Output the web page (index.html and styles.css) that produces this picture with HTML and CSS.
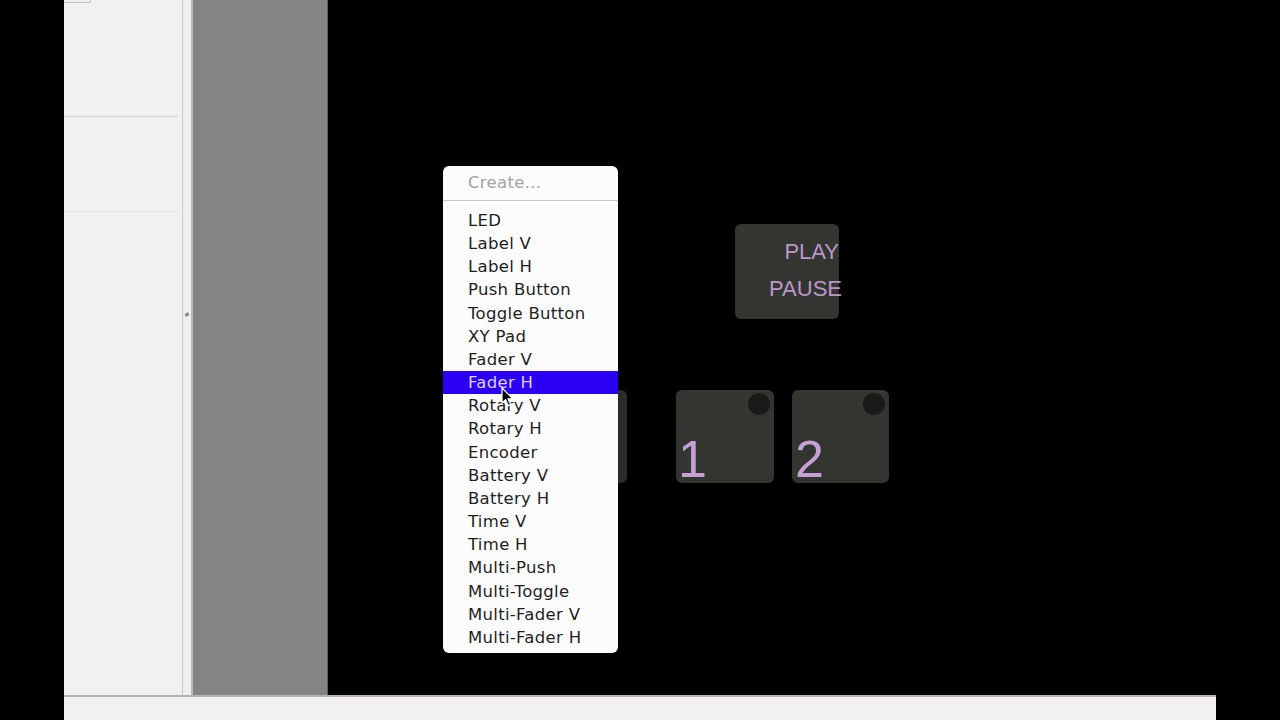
FILE: index.html
```html
<!DOCTYPE html>
<html lang="en">
<head>
  <meta charset="UTF-8" />
  <meta name="viewport" content="width=device-width, initial-scale=1" />
  <title>Layout Editor</title>
  <link rel="stylesheet" href="styles.css">
</head>
<body>
  <div class="window">
    <div class="workspace">
      <aside class="sidebar">
        <div class="sidebar-tab"></div>
        <div class="sidebar-section first"></div>
        <div class="sidebar-section second"></div>
      </aside>
      <div class="splitter"><span class="grip"></span></div>
      <div class="palette"></div>

      <main class="canvas">
        <div class="widget toggle behind"></div>

        <div class="widget label-pad">
          <span>PLAY</span>
          <span>PAUSE</span>
        </div>

        <div class="widget toggle first">
          <span class="led"></span>
          <span class="num">1</span>
        </div>
        <div class="widget toggle second">
          <span class="led"></span>
          <span class="num">2</span>
        </div>
      </main>
    </div>
    <div class="statusbar"></div>
  </div>

  <!-- right-click menu on the canvas -->
  <div class="context-menu">
    <div class="menu-title">Create...</div>
    <div class="menu-sep"></div>
    <ul class="menu-items">
      <li>LED</li>
      <li>Label V</li>
      <li>Label H</li>
      <li>Push Button</li>
      <li>Toggle Button</li>
      <li>XY Pad</li>
      <li>Fader V</li>
      <li class="active">Fader H</li>
      <li>Rotary V</li>
      <li>Rotary H</li>
      <li>Encoder</li>
      <li>Battery V</li>
      <li>Battery H</li>
      <li>Time V</li>
      <li>Time H</li>
      <li>Multi-Push</li>
      <li>Multi-Toggle</li>
      <li>Multi-Fader V</li>
      <li>Multi-Fader H</li>
    </ul>
  </div>

  <svg class="pointer" width="14" height="21" viewBox="0 0 14 21">
    <path d="M1 1 L1 16 L4.6 12.6 L7.2 18.6 L9.6 17.6 L7 11.8 L11.8 11.8 Z" fill="#000" stroke="#fff" stroke-width="1.2" stroke-linejoin="round"/>
  </svg>
</body>
</html>
```

FILE: styles.css
```css
body {
  margin: 0;
  padding: 0;
  background-color: #000;
  font-family: "DejaVu Sans", Verdana, sans-serif;
  overflow: hidden;
}

.window {
  margin-left: 64px;
  width: 1152px;
  height: 720px;
  display: flex;
  flex-direction: column;
}

.workspace {
  height: 695px;
  flex-shrink: 0;
  display: flex;
}

/* left inspector */
.sidebar {
  width: 118px;
  background-color: #f2f0f1;
  display: flex;
  flex-direction: column;
}

.sidebar-tab {
  width: 26px;
  height: 2px;
  border-right: 1px solid #c4c2c3;
  border-bottom: 1px solid #c4c2c3;
  border-bottom-right-radius: 3px;
}

.sidebar-section {
  margin-right: 4px;
}

.sidebar-section.first {
  height: 113px;
  border-bottom: 1px solid #d2d0d1;
}

.sidebar-section.second {
  height: 94px;
  border-bottom: 1px solid #e6e4e5;
}

.splitter {
  width: 11px;
  box-sizing: border-box;
  background-color: #f0eeef;
  border-left: 1px solid #cac8c9;
  border-right: 2px solid #bab8b9;
  position: relative;
}

.grip {
  position: absolute;
  left: 2px;
  top: 313px;
  width: 4px;
  height: 3px;
  background-color: #8a8889;
  transform: rotate(-35deg);
}

.palette {
  width: 135px;
  box-sizing: border-box;
  background-color: #858384;
  border-right: 1px solid #5e5d5e;
}

/* black layout area with the widgets */
.canvas {
  flex: 1;
  position: relative;
  background-color: #000;
}

.statusbar {
  height: 25px;
  box-sizing: border-box;
  background-color: #f2f0f1;
  border-top: 2px solid #b4b2b3;
}

.widget {
  position: absolute;
  background-color: #333531;
  border-radius: 6px;
  font-family: "Liberation Sans", Arial, sans-serif;
  color: #bd97cc;
}

.label-pad {
  left: 407px;
  top: 224px;
  width: 104px;
  height: 95px;
  display: flex;
  flex-direction: column;
  align-items: flex-end;
  padding-top: 9px;
  box-sizing: border-box;
  font-size: 22px;
  line-height: 37px;
}

.label-pad span {
  margin-right: -3px;
}

.label-pad span:first-child {
  margin-right: 0;
}

.toggle {
  top: 390px;
  width: 98px;
  height: 93px;
}

.toggle.behind {
  left: 201px;
  background-color: #2b2d2a;
}

.toggle.first {
  left: 348px;
}

.toggle.second {
  left: 464px;
  width: 97px;
}

.led {
  position: absolute;
  top: 3px;
  right: 4px;
  width: 22px;
  height: 22px;
  border-radius: 50%;
  background-color: #1a1b18;
}

.num {
  position: absolute;
  left: 2px;
  bottom: -2px;
  font-size: 52px;
  line-height: 52px;
  color: #c7a0d6;
}

.toggle.second .num {
  left: 3px;
}

/* popup */
.context-menu {
  position: absolute;
  left: 443px;
  top: 166px;
  width: 175px;
  height: 487px;
  box-sizing: border-box;
  padding-top: 5px;
  background-color: #fdfcfd;
  border-radius: 6px;
  font-size: 16.5px;
  letter-spacing: 0.3px;
  color: #1e1e1e;
}

.menu-title {
  height: 24px;
  line-height: 24px;
  padding-left: 25px;
  color: #a3a2a3;
}

.menu-sep {
  height: 1px;
  margin: 5px 0 8px;
  background-color: #c9c8c9;
}

.menu-items {
  list-style: none;
  margin: 0;
  padding: 0;
}

.menu-items li {
  height: 23.17px;
  line-height: 23px;
  padding-left: 25px;
}

.menu-items li.active {
  background-color: #2c00f4;
  color: #ddd0ff;
}

.pointer {
  position: absolute;
  left: 501px;
  top: 387px;
}
```
